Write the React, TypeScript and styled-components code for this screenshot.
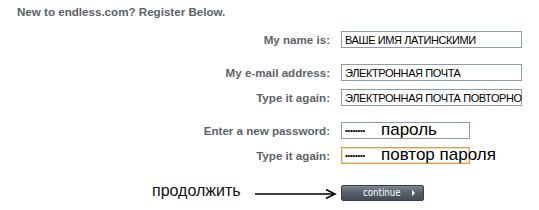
import React from "react";
import styled, { createGlobalStyle } from "styled-components";

const Global = createGlobalStyle`
  html, body { margin: 0; padding: 0; background: #fff; }
  body { font-family: "Liberation Sans", Arial, sans-serif; }
`;

const Page = styled.div`
  width: 539px;
  height: 210px;
  overflow: hidden;
`;

const Header = styled.div`
  padding: 5px 0 0 17px;
  height: 14px;
  font-size: 11.6px;
  line-height: 14px;
  font-weight: bold;
  color: #5a616a;
`;

const Form = styled.div`
  display: flex;
  flex-direction: column;
  gap: 16px;
  margin-top: 12px;
`;

const Group = styled.div`
  display: flex;
  flex-direction: column;
  gap: 8px;
`;

const Row = styled.div`
  display: grid;
  grid-template-columns: 331px 1fr;
  align-items: center;
  height: 17px;
`;

const Label = styled.label`
  justify-self: end;
  padding-right: 1px;
  font-size: 11.6px;
  font-weight: bold;
  color: #5b636d;
  white-space: nowrap;
`;

const Field = styled.div<{ $w: number; $focus?: boolean }>`
  margin-left: 10px;
  width: ${(p) => p.$w}px;
  height: 17px;
  box-sizing: border-box;
  border: 1px solid ${(p) => (p.$focus ? "#d6a24a" : "#8a9db0")};
  box-shadow: ${(p) => (p.$focus ? "inset 0 0 0 1px #f3dca8" : "none")};
  display: flex;
  align-items: center;
  padding-left: 3px;
  font-size: 11px;
  letter-spacing: -0.4px;
  color: #000;
  white-space: nowrap;
  overflow: visible;
`;

const Dots = styled.span`
  flex-shrink: 0;
  font-size: 8px;
  letter-spacing: -0.3px;
  width: 20px;
  margin-right: 16px;
  overflow: hidden;
`;

const Hint = styled.span`
  flex-shrink: 0;
  font-size: 17px;
  letter-spacing: 0;
  position: relative;
  top: -1px;
`;

const ActionRow = styled.div`
  display: flex;
  align-items: center;
  margin-top: 19px;
  height: 20px;
`;

const Continue = styled.span`
  font-size: 16px;
  color: #111;
  margin-left: 152px;
  width: 103px;
  position: relative;
  top: -2px;
`;

const Arrow = styled.svg`
  display: block;
  margin-top: 2px;
`;

const Button = styled.button`
  margin-left: 4px;
  width: 83px;
  height: 16px;
  box-sizing: border-box;
  border: 1px solid #36404a;
  border-radius: 2px;
  background: linear-gradient(#7b8794, #56616d 45%, #434d58);
  color: #fff;
  font-family: "DejaVu Sans Condensed", "DejaVu Sans", sans-serif;
  font-size: 9.6px;
  line-height: 12px;
  padding: 0 0 1px 21px;
  display: flex;
  align-items: center;
  gap: 11px;
  cursor: pointer;
`;

const Tri = styled.span`
  width: 0;
  height: 0;
  border-left: 3px solid #fff;
  border-top: 3px solid transparent;
  border-bottom: 3px solid transparent;
`;

export default function App() {
  return (
    <Page>
      <Global />
      <Header>New to endless.com? Register Below.</Header>
      <Form>
        <Group>
          <Row>
            <Label>My name is:</Label>
            <Field $w={181}>ВАШЕ ИМЯ ЛАТИНСКИМИ</Field>
          </Row>
        </Group>
        <Group>
          <Row>
            <Label>My e-mail address:</Label>
            <Field $w={181}>ЭЛЕКТРОННАЯ ПОЧТА</Field>
          </Row>
          <Row>
            <Label>Type it again:</Label>
            <Field $w={181}>ЭЛЕКТРОННАЯ ПОЧТА ПОВТОРНО</Field>
          </Row>
        </Group>
        <Group>
          <Row>
            <Label>Enter a new password:</Label>
            <Field $w={129}>
              <Dots>••••••••</Dots>
              <Hint>пароль</Hint>
            </Field>
          </Row>
          <Row>
            <Label>Type it again:</Label>
            <Field $w={129} $focus>
              <Dots>••••••••</Dots>
              <Hint>повтор пароля</Hint>
            </Field>
          </Row>
        </Group>
      </Form>
      <ActionRow>
        <Continue>продолжить</Continue>
        <Arrow width="82" height="10" viewBox="0 0 82 10">
          <line x1="0" y1="5" x2="79" y2="5" stroke="#000" strokeWidth="1.6" />
          <path d="M71 0.5 L80 5 L71 9.5" fill="none" stroke="#000" strokeWidth="1.6" />
        </Arrow>
        <Button>
          continue <Tri />
        </Button>
      </ActionRow>
    </Page>
  );
}
